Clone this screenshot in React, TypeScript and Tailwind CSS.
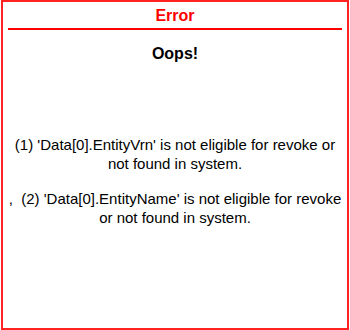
export default function App() {
  return (
    <div className="w-[350px] h-[330px] bg-white" style={{ fontFamily: '"Liberation Sans", Arial, sans-serif' }}>
      <div className="h-full w-[348px] ml-px border-2 border-[#f22] flex flex-col">
        {/* Header */}
        <div className="mx-[5px] h-[28px] flex items-center justify-center border-b-2 border-[#f00]">
          <span className="text-[16px] font-bold text-[#f00] leading-none mt-[2px]">Error</span>
        </div>

        {/* Body */}
        <div className="flex flex-col items-center px-[1px] text-black">
          <p className="mt-[14px] text-[16px] font-bold leading-[20px]">Oops!</p>
          <div className="mt-[71px] text-[15px] leading-[19px] text-center">
            <p>(1) 'Data[0].EntityVrn' is not eligible for revoke or not found in system.</p>
            <p className="mt-[16px]">,&nbsp;&nbsp;(2) 'Data[0].EntityName' is not eligible for revoke or not found in system.</p>
          </div>
        </div>
      </div>
    </div>
  );
}
